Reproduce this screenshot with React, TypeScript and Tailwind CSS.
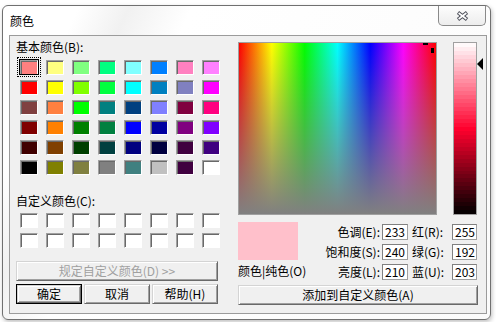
import React from "react";

const basic = [
  "bg-[#ff8080]", "bg-[#ffff80]", "bg-[#80ff80]", "bg-[#00ff80]", "bg-[#80ffff]", "bg-[#0080ff]", "bg-[#ff80c0]", "bg-[#ff80ff]",
  "bg-[#ff0000]", "bg-[#ffff00]", "bg-[#80ff00]", "bg-[#00ff40]", "bg-[#00ffff]", "bg-[#0080c0]", "bg-[#8080c0]", "bg-[#ff00ff]",
  "bg-[#804040]", "bg-[#ff8040]", "bg-[#00ff00]", "bg-[#008080]", "bg-[#004080]", "bg-[#8080ff]", "bg-[#800040]", "bg-[#ff0080]",
  "bg-[#800000]", "bg-[#ff8000]", "bg-[#008000]", "bg-[#008040]", "bg-[#0000ff]", "bg-[#0000a0]", "bg-[#800080]", "bg-[#8000ff]",
  "bg-[#400000]", "bg-[#804000]", "bg-[#004000]", "bg-[#004040]", "bg-[#000080]", "bg-[#000040]", "bg-[#400040]", "bg-[#400080]",
  "bg-[#000000]", "bg-[#808000]", "bg-[#808040]", "bg-[#808080]", "bg-[#408080]", "bg-[#c0c0c0]", "bg-[#400040]", "bg-[#ffffff]",
];

const PURE = [255, 0, 45];
const N = 43;
const lumBands = Array.from({ length: N }, (_, i) => {
  const l = 1 - (i + 0.5) / N;
  const c = PURE.map((p) =>
    Math.round(l > 0.5 ? p + (255 - p) * (2 * l - 1) : p * 2 * l)
  );
  return `rgb(${c[0]},${c[1]},${c[2]})`;
});

function Swatch({ cls, sel }: { cls: string; sel?: boolean }) {
  return (
    <div
      className={
        "relative w-[18px] h-[15px] border border-t-[#a0a0a0] border-l-[#a0a0a0] border-r-white border-b-white shadow-[inset_1px_1px_0_#696969] " +
        cls
      }
    >
      {sel && (
        <>
          <span className="absolute -left-[2px] -top-[2px] -right-[2px] -bottom-[1px] border border-black" />
          <span className="absolute -left-[4px] -top-[4px] -right-[4px] -bottom-[3px] border border-dotted border-black" />
        </>
      )}
    </div>
  );
}

function Btn({
  children,
  className = "",
  disabled,
  def,
}: {
  children: React.ReactNode;
  className?: string;
  disabled?: boolean;
  def?: boolean;
}) {
  const inner = (
    <div
      className={
        "h-full w-full flex items-center justify-center bg-[#f0f0f0] border border-t-[#d4d4d4] border-l-[#d4d4d4] border-r-[#696969] border-b-[#696969] shadow-[inset_1px_1px_0_#ffffff,inset_-1px_-1px_0_#a0a0a0] whitespace-nowrap " +
        (disabled ? "text-[#a0a0a0]" : "text-black")
      }
    >
      {children}
    </div>
  );
  return (
    <div className={"h-[20px] " + (def ? "border border-black " : "") + className}>
      {inner}
    </div>
  );
}

function Field({ v, w }: { v: string; w: string }) {
  return (
    <div
      className={
        "h-[16px] bg-white border border-[#a0a0a0] border-t-[#808080] border-l-[#808080] pl-[2px] leading-[14px] " +
        w
      }
    >
      {v}
    </div>
  );
}

export default function App() {
  return (
    <div className="w-[496px] h-[322px] bg-white overflow-hidden pt-[5px] pl-[2px] font-['Noto_Sans_CJK_SC',sans-serif] text-[12px] leading-[14px] text-black">
      <div className="relative w-[489px] h-[315px] rounded-[6px] border border-[#707070] bg-[linear-gradient(115deg,#ffffff_0%,#ffffff_12%,#f1f1f1_20%,#ffffff_30%,#fbfbfb_100%)] shadow-[1px_2px_4px_rgba(0,0,0,0.25)]">
        {/* title */}
        <div className="h-[29px] pl-[7px] pt-[8px]">颜色</div>
        {/* close */}
        <div className="absolute top-0 right-[4px] w-[48px] h-[20px] rounded-b-[5px] border border-t-0 border-[#8a8a8a] bg-[linear-gradient(to_bottom,#fdfdfd,#ededed)] flex items-center justify-center">
          <svg width="13" height="10" viewBox="0 0 13 10">
            <g strokeLinecap="butt">
              <line x1="2" y1="1.5" x2="11" y2="8.5" stroke="#4d4f5a" strokeWidth="3.6" />
              <line x1="11" y1="1.5" x2="2" y2="8.5" stroke="#4d4f5a" strokeWidth="3.6" />
              <line x1="2.6" y1="2" x2="10.4" y2="8" stroke="#ffffff" strokeWidth="1.6" />
              <line x1="10.4" y1="2" x2="2.6" y2="8" stroke="#ffffff" strokeWidth="1.6" />
            </g>
          </svg>
        </div>
        {/* client */}
        <div className="ml-[6px] w-[478px] h-[279px] border border-[#9b9b9b] bg-[#f0f0f0] flex">
          {/* left column */}
          <div className="w-[210px] pl-[6px] pt-[4px] flex flex-col">
            <div className="whitespace-nowrap">基本颜色(B):</div>
            <div className="mt-[6px] ml-[4px] grid grid-cols-[repeat(8,18px)] gap-x-[8px] gap-y-[5px]">
              {basic.map((c, i) => (
                <Swatch key={i} cls={c} sel={i === 0} />
              ))}
            </div>
            <div className="mt-[19px] whitespace-nowrap">自定义颜色(C):</div>
            <div className="mt-[5px] ml-[4px] grid grid-cols-[repeat(8,18px)] gap-x-[8px] gap-y-[5px]">
              {Array.from({ length: 16 }, (_, i) => (
                <Swatch key={i} cls="bg-white" />
              ))}
            </div>
            <Btn className="mt-[13px] w-[202px]" disabled>
              规定自定义颜色(D) &gt;&gt;
            </Btn>
            <div className="mt-[3px] flex gap-[2px]">
              <Btn className="w-[66px]" def>
                确定
              </Btn>
              <Btn className="w-[66px]">取消</Btn>
              <Btn className="w-[66px]">帮助(H)</Btn>
            </div>
          </div>
          {/* right column */}
          <div className="ml-[18px] pt-[6px] flex flex-col">
            <div className="flex h-[173px]">
              <div className="relative w-[199px] h-full border border-[#a0a0a0] bg-[image:linear-gradient(to_bottom,rgba(128,128,128,0),#808080),linear-gradient(to_right,#ff0000,#ffff00,#00ff00,#00ffff,#0000ff,#ff00ff,#ff0000)]">
                <span className="absolute left-[184px] top-0 w-[5px] h-[2px] bg-black" />
                <span className="absolute left-[192px] top-[5px] w-[3px] h-[5px] bg-black" />
              </div>
              <div className="relative ml-[16px] w-[24px] h-full border border-[#a0a0a0] flex flex-col">
                {lumBands.map((c, i) => (
                  <div key={i} className="flex-1" style={{ backgroundColor: c }} />
                ))}
                <svg
                  className="absolute left-full top-[15px] ml-[1px]"
                  width="6"
                  height="12"
                  viewBox="0 0 6 12"
                >
                  <polygon points="6,0 6,12 0,6" fill="#000" />
                </svg>
              </div>
            </div>
            <div className="mt-[7px] h-[63px] flex">
              <div className="w-[60px] flex flex-col">
                <div className="h-[38px] bg-[#ffc0cb]" />
                <div className="mt-[4px] whitespace-nowrap">颜色|纯色(O)</div>
              </div>
              <div className="mt-[2px] flex flex-col gap-[4px]">
                {[
                  ["色调(E):", "233", "红(R):", "255"],
                  ["饱和度(S):", "240", "绿(G):", "192"],
                  ["亮度(L):", "210", "蓝(U):", "203"],
                ].map((r, i) => (
                  <div key={i} className="flex h-[16px] items-center">
                    <div className="w-[84px] pr-[2px] text-right whitespace-nowrap">{r[0]}</div>
                    <Field v={r[1]} w="w-[26px]" />
                    <div className="w-[44px] pl-[4px] whitespace-nowrap">{r[2]}</div>
                    <Field v={r[3]} w="w-[25px]" />
                  </div>
                ))}
              </div>
            </div>
            <Btn className="w-[240px]">添加到自定义颜色(A)</Btn>
          </div>
        </div>
      </div>
    </div>
  );
}
